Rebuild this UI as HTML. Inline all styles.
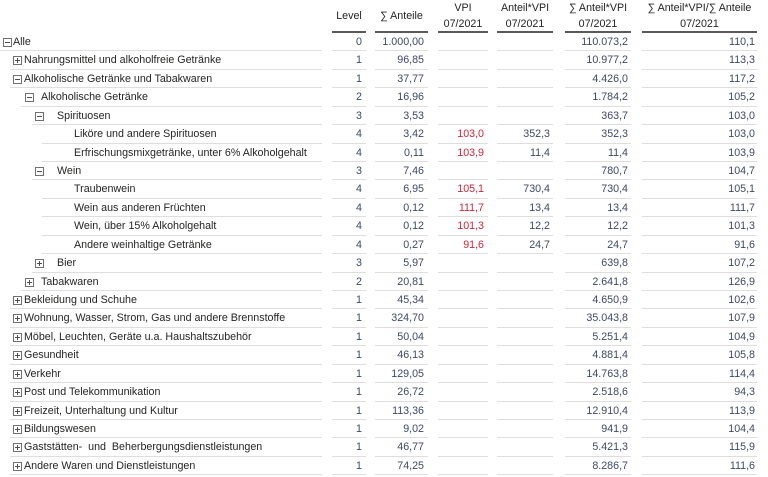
<!DOCTYPE html>
<html><head><meta charset="utf-8"><style>
*{margin:0;padding:0;box-sizing:border-box}
body{width:768px;height:477px;background:#fff;font-family:"Liberation Sans",sans-serif;font-size:10.7px;color:#252423;position:relative;overflow:hidden}
.h{position:absolute;text-align:center;line-height:16px;color:#252423;border-bottom:2px solid #5a5a5a;height:33px;top:0;display:flex;align-items:center;justify-content:center}
.r{position:absolute;left:0;width:768px;height:18.43px}
.c{position:absolute;top:0;height:18.43px;line-height:18px;border-bottom:1px solid #dedede;text-align:right;color:#3b4866;white-space:nowrap}
.l{text-align:left;color:#252423;right:auto}
.red{color:#d0263a}
.i{position:absolute;top:5px;width:9px;height:9px;border:1px solid #707070}
.i:before{content:"";position:absolute;left:1px;top:3px;width:5px;height:1px;background:#505050}
.p:after{content:"";position:absolute;left:3px;top:1px;width:1px;height:5px;background:#505050}
</style></head><body>
<div class="h" style="left:332px;width:34px">Level</div>
<div class="h" style="left:375px;width:53px">∑ Anteile</div>
<div class="h" style="left:438px;width:50px">VPI<br>07/2021</div>
<div class="h" style="left:497px;width:56px">Anteil*VPI<br>07/2021</div>
<div class="h" style="left:565px;width:66px">∑ Anteil*VPI<br>07/2021</div>
<div class="h" style="left:642px;width:115px">∑ Anteil*VPI/∑ Anteile<br>07/2021</div>
<div class="r" style="top:33px"><div class="c l" style="left:0;width:322px"><span class="i" style="left:3px"></span><span style="position:absolute;left:13px">Alle</span></div><div class="c" style="left:332px;width:34px;padding-right:4px">0</div><div class="c" style="left:375px;width:53px;padding-right:4px">1.000,00</div><div class="c" style="left:438px;width:50px;padding-right:4px"></div><div class="c" style="left:497px;width:56px;padding-right:3px"></div><div class="c" style="left:565px;width:66px;padding-right:3px">110.073,2</div><div class="c" style="left:642px;width:115px;padding-right:2px">110,1</div></div>
<div class="r" style="top:51.43px"><div class="c l" style="left:10px;width:312px"><span class="i p" style="left:3px"></span><span style="position:absolute;left:14px">Nahrungsmittel und alkoholfreie Getränke</span></div><div class="c" style="left:332px;width:34px;padding-right:4px">1</div><div class="c" style="left:375px;width:53px;padding-right:4px">96,85</div><div class="c" style="left:438px;width:50px;padding-right:4px"></div><div class="c" style="left:497px;width:56px;padding-right:3px"></div><div class="c" style="left:565px;width:66px;padding-right:3px">10.977,2</div><div class="c" style="left:642px;width:115px;padding-right:2px">113,3</div></div>
<div class="r" style="top:69.86px"><div class="c l" style="left:10px;width:312px"><span class="i" style="left:3px"></span><span style="position:absolute;left:14px">Alkoholische Getränke und Tabakwaren</span></div><div class="c" style="left:332px;width:34px;padding-right:4px">1</div><div class="c" style="left:375px;width:53px;padding-right:4px">37,77</div><div class="c" style="left:438px;width:50px;padding-right:4px"></div><div class="c" style="left:497px;width:56px;padding-right:3px"></div><div class="c" style="left:565px;width:66px;padding-right:3px">4.426,0</div><div class="c" style="left:642px;width:115px;padding-right:2px">117,2</div></div>
<div class="r" style="top:88.29px"><div class="c l" style="left:21px;width:301px"><span class="i" style="left:4px"></span><span style="position:absolute;left:20px">Alkoholische Getränke</span></div><div class="c" style="left:332px;width:34px;padding-right:4px">2</div><div class="c" style="left:375px;width:53px;padding-right:4px">16,96</div><div class="c" style="left:438px;width:50px;padding-right:4px"></div><div class="c" style="left:497px;width:56px;padding-right:3px"></div><div class="c" style="left:565px;width:66px;padding-right:3px">1.784,2</div><div class="c" style="left:642px;width:115px;padding-right:2px">105,2</div></div>
<div class="r" style="top:106.72px"><div class="c l" style="left:32px;width:290px"><span class="i" style="left:3px"></span><span style="position:absolute;left:25px">Spirituosen</span></div><div class="c" style="left:332px;width:34px;padding-right:4px">3</div><div class="c" style="left:375px;width:53px;padding-right:4px">3,53</div><div class="c" style="left:438px;width:50px;padding-right:4px"></div><div class="c" style="left:497px;width:56px;padding-right:3px"></div><div class="c" style="left:565px;width:66px;padding-right:3px">363,7</div><div class="c" style="left:642px;width:115px;padding-right:2px">103,0</div></div>
<div class="r" style="top:125.15px"><div class="c l" style="left:42px;width:280px"><span style="position:absolute;left:32px">Liköre und andere Spirituosen</span></div><div class="c" style="left:332px;width:34px;padding-right:4px">4</div><div class="c" style="left:375px;width:53px;padding-right:4px">3,42</div><div class="c red" style="left:438px;width:50px;padding-right:4px">103,0</div><div class="c" style="left:497px;width:56px;padding-right:3px">352,3</div><div class="c" style="left:565px;width:66px;padding-right:3px">352,3</div><div class="c" style="left:642px;width:115px;padding-right:2px">103,0</div></div>
<div class="r" style="top:143.58px"><div class="c l" style="left:42px;width:280px"><span style="position:absolute;left:32px">Erfrischungsmixgetränke, unter 6% Alkoholgehalt</span></div><div class="c" style="left:332px;width:34px;padding-right:4px">4</div><div class="c" style="left:375px;width:53px;padding-right:4px">0,11</div><div class="c red" style="left:438px;width:50px;padding-right:4px">103,9</div><div class="c" style="left:497px;width:56px;padding-right:3px">11,4</div><div class="c" style="left:565px;width:66px;padding-right:3px">11,4</div><div class="c" style="left:642px;width:115px;padding-right:2px">103,9</div></div>
<div class="r" style="top:162.01px"><div class="c l" style="left:32px;width:290px"><span class="i" style="left:3px"></span><span style="position:absolute;left:25px">Wein</span></div><div class="c" style="left:332px;width:34px;padding-right:4px">3</div><div class="c" style="left:375px;width:53px;padding-right:4px">7,46</div><div class="c" style="left:438px;width:50px;padding-right:4px"></div><div class="c" style="left:497px;width:56px;padding-right:3px"></div><div class="c" style="left:565px;width:66px;padding-right:3px">780,7</div><div class="c" style="left:642px;width:115px;padding-right:2px">104,7</div></div>
<div class="r" style="top:180.44px"><div class="c l" style="left:42px;width:280px"><span style="position:absolute;left:32px">Traubenwein</span></div><div class="c" style="left:332px;width:34px;padding-right:4px">4</div><div class="c" style="left:375px;width:53px;padding-right:4px">6,95</div><div class="c red" style="left:438px;width:50px;padding-right:4px">105,1</div><div class="c" style="left:497px;width:56px;padding-right:3px">730,4</div><div class="c" style="left:565px;width:66px;padding-right:3px">730,4</div><div class="c" style="left:642px;width:115px;padding-right:2px">105,1</div></div>
<div class="r" style="top:198.87px"><div class="c l" style="left:42px;width:280px"><span style="position:absolute;left:32px">Wein aus anderen Früchten</span></div><div class="c" style="left:332px;width:34px;padding-right:4px">4</div><div class="c" style="left:375px;width:53px;padding-right:4px">0,12</div><div class="c red" style="left:438px;width:50px;padding-right:4px">111,7</div><div class="c" style="left:497px;width:56px;padding-right:3px">13,4</div><div class="c" style="left:565px;width:66px;padding-right:3px">13,4</div><div class="c" style="left:642px;width:115px;padding-right:2px">111,7</div></div>
<div class="r" style="top:217.3px"><div class="c l" style="left:42px;width:280px"><span style="position:absolute;left:32px">Wein, über 15% Alkoholgehalt</span></div><div class="c" style="left:332px;width:34px;padding-right:4px">4</div><div class="c" style="left:375px;width:53px;padding-right:4px">0,12</div><div class="c red" style="left:438px;width:50px;padding-right:4px">101,3</div><div class="c" style="left:497px;width:56px;padding-right:3px">12,2</div><div class="c" style="left:565px;width:66px;padding-right:3px">12,2</div><div class="c" style="left:642px;width:115px;padding-right:2px">101,3</div></div>
<div class="r" style="top:235.73px"><div class="c l" style="left:42px;width:280px"><span style="position:absolute;left:32px">Andere weinhaltige Getränke</span></div><div class="c" style="left:332px;width:34px;padding-right:4px">4</div><div class="c" style="left:375px;width:53px;padding-right:4px">0,27</div><div class="c red" style="left:438px;width:50px;padding-right:4px">91,6</div><div class="c" style="left:497px;width:56px;padding-right:3px">24,7</div><div class="c" style="left:565px;width:66px;padding-right:3px">24,7</div><div class="c" style="left:642px;width:115px;padding-right:2px">91,6</div></div>
<div class="r" style="top:254.16px"><div class="c l" style="left:32px;width:290px"><span class="i p" style="left:3px"></span><span style="position:absolute;left:25px">Bier</span></div><div class="c" style="left:332px;width:34px;padding-right:4px">3</div><div class="c" style="left:375px;width:53px;padding-right:4px">5,97</div><div class="c" style="left:438px;width:50px;padding-right:4px"></div><div class="c" style="left:497px;width:56px;padding-right:3px"></div><div class="c" style="left:565px;width:66px;padding-right:3px">639,8</div><div class="c" style="left:642px;width:115px;padding-right:2px">107,2</div></div>
<div class="r" style="top:272.59px"><div class="c l" style="left:21px;width:301px"><span class="i p" style="left:4px"></span><span style="position:absolute;left:20px">Tabakwaren</span></div><div class="c" style="left:332px;width:34px;padding-right:4px">2</div><div class="c" style="left:375px;width:53px;padding-right:4px">20,81</div><div class="c" style="left:438px;width:50px;padding-right:4px"></div><div class="c" style="left:497px;width:56px;padding-right:3px"></div><div class="c" style="left:565px;width:66px;padding-right:3px">2.641,8</div><div class="c" style="left:642px;width:115px;padding-right:2px">126,9</div></div>
<div class="r" style="top:291.02px"><div class="c l" style="left:10px;width:312px"><span class="i p" style="left:3px"></span><span style="position:absolute;left:14px">Bekleidung und Schuhe</span></div><div class="c" style="left:332px;width:34px;padding-right:4px">1</div><div class="c" style="left:375px;width:53px;padding-right:4px">45,34</div><div class="c" style="left:438px;width:50px;padding-right:4px"></div><div class="c" style="left:497px;width:56px;padding-right:3px"></div><div class="c" style="left:565px;width:66px;padding-right:3px">4.650,9</div><div class="c" style="left:642px;width:115px;padding-right:2px">102,6</div></div>
<div class="r" style="top:309.45px"><div class="c l" style="left:10px;width:312px"><span class="i p" style="left:3px"></span><span style="position:absolute;left:14px">Wohnung, Wasser, Strom, Gas und andere Brennstoffe</span></div><div class="c" style="left:332px;width:34px;padding-right:4px">1</div><div class="c" style="left:375px;width:53px;padding-right:4px">324,70</div><div class="c" style="left:438px;width:50px;padding-right:4px"></div><div class="c" style="left:497px;width:56px;padding-right:3px"></div><div class="c" style="left:565px;width:66px;padding-right:3px">35.043,8</div><div class="c" style="left:642px;width:115px;padding-right:2px">107,9</div></div>
<div class="r" style="top:327.88px"><div class="c l" style="left:10px;width:312px"><span class="i p" style="left:3px"></span><span style="position:absolute;left:14px">Möbel, Leuchten, Geräte u.a. Haushaltszubehör</span></div><div class="c" style="left:332px;width:34px;padding-right:4px">1</div><div class="c" style="left:375px;width:53px;padding-right:4px">50,04</div><div class="c" style="left:438px;width:50px;padding-right:4px"></div><div class="c" style="left:497px;width:56px;padding-right:3px"></div><div class="c" style="left:565px;width:66px;padding-right:3px">5.251,4</div><div class="c" style="left:642px;width:115px;padding-right:2px">104,9</div></div>
<div class="r" style="top:346.31px"><div class="c l" style="left:10px;width:312px"><span class="i p" style="left:3px"></span><span style="position:absolute;left:14px">Gesundheit</span></div><div class="c" style="left:332px;width:34px;padding-right:4px">1</div><div class="c" style="left:375px;width:53px;padding-right:4px">46,13</div><div class="c" style="left:438px;width:50px;padding-right:4px"></div><div class="c" style="left:497px;width:56px;padding-right:3px"></div><div class="c" style="left:565px;width:66px;padding-right:3px">4.881,4</div><div class="c" style="left:642px;width:115px;padding-right:2px">105,8</div></div>
<div class="r" style="top:364.74px"><div class="c l" style="left:10px;width:312px"><span class="i p" style="left:3px"></span><span style="position:absolute;left:14px">Verkehr</span></div><div class="c" style="left:332px;width:34px;padding-right:4px">1</div><div class="c" style="left:375px;width:53px;padding-right:4px">129,05</div><div class="c" style="left:438px;width:50px;padding-right:4px"></div><div class="c" style="left:497px;width:56px;padding-right:3px"></div><div class="c" style="left:565px;width:66px;padding-right:3px">14.763,8</div><div class="c" style="left:642px;width:115px;padding-right:2px">114,4</div></div>
<div class="r" style="top:383.17px"><div class="c l" style="left:10px;width:312px"><span class="i p" style="left:3px"></span><span style="position:absolute;left:14px">Post und Telekommunikation</span></div><div class="c" style="left:332px;width:34px;padding-right:4px">1</div><div class="c" style="left:375px;width:53px;padding-right:4px">26,72</div><div class="c" style="left:438px;width:50px;padding-right:4px"></div><div class="c" style="left:497px;width:56px;padding-right:3px"></div><div class="c" style="left:565px;width:66px;padding-right:3px">2.518,6</div><div class="c" style="left:642px;width:115px;padding-right:2px">94,3</div></div>
<div class="r" style="top:401.6px"><div class="c l" style="left:10px;width:312px"><span class="i p" style="left:3px"></span><span style="position:absolute;left:14px">Freizeit, Unterhaltung und Kultur</span></div><div class="c" style="left:332px;width:34px;padding-right:4px">1</div><div class="c" style="left:375px;width:53px;padding-right:4px">113,36</div><div class="c" style="left:438px;width:50px;padding-right:4px"></div><div class="c" style="left:497px;width:56px;padding-right:3px"></div><div class="c" style="left:565px;width:66px;padding-right:3px">12.910,4</div><div class="c" style="left:642px;width:115px;padding-right:2px">113,9</div></div>
<div class="r" style="top:420.03px"><div class="c l" style="left:10px;width:312px"><span class="i p" style="left:3px"></span><span style="position:absolute;left:14px">Bildungswesen</span></div><div class="c" style="left:332px;width:34px;padding-right:4px">1</div><div class="c" style="left:375px;width:53px;padding-right:4px">9,02</div><div class="c" style="left:438px;width:50px;padding-right:4px"></div><div class="c" style="left:497px;width:56px;padding-right:3px"></div><div class="c" style="left:565px;width:66px;padding-right:3px">941,9</div><div class="c" style="left:642px;width:115px;padding-right:2px">104,4</div></div>
<div class="r" style="top:438.46px"><div class="c l" style="left:10px;width:312px"><span class="i p" style="left:3px"></span><span style="position:absolute;left:14px">Gaststätten-&nbsp; und&nbsp; Beherbergungsdienstleistungen</span></div><div class="c" style="left:332px;width:34px;padding-right:4px">1</div><div class="c" style="left:375px;width:53px;padding-right:4px">46,77</div><div class="c" style="left:438px;width:50px;padding-right:4px"></div><div class="c" style="left:497px;width:56px;padding-right:3px"></div><div class="c" style="left:565px;width:66px;padding-right:3px">5.421,3</div><div class="c" style="left:642px;width:115px;padding-right:2px">115,9</div></div>
<div class="r" style="top:456.89px"><div class="c l" style="left:10px;width:312px"><span class="i p" style="left:3px"></span><span style="position:absolute;left:14px">Andere Waren und Dienstleistungen</span></div><div class="c" style="left:332px;width:34px;padding-right:4px">1</div><div class="c" style="left:375px;width:53px;padding-right:4px">74,25</div><div class="c" style="left:438px;width:50px;padding-right:4px"></div><div class="c" style="left:497px;width:56px;padding-right:3px"></div><div class="c" style="left:565px;width:66px;padding-right:3px">8.286,7</div><div class="c" style="left:642px;width:115px;padding-right:2px">111,6</div></div>
</body></html>
